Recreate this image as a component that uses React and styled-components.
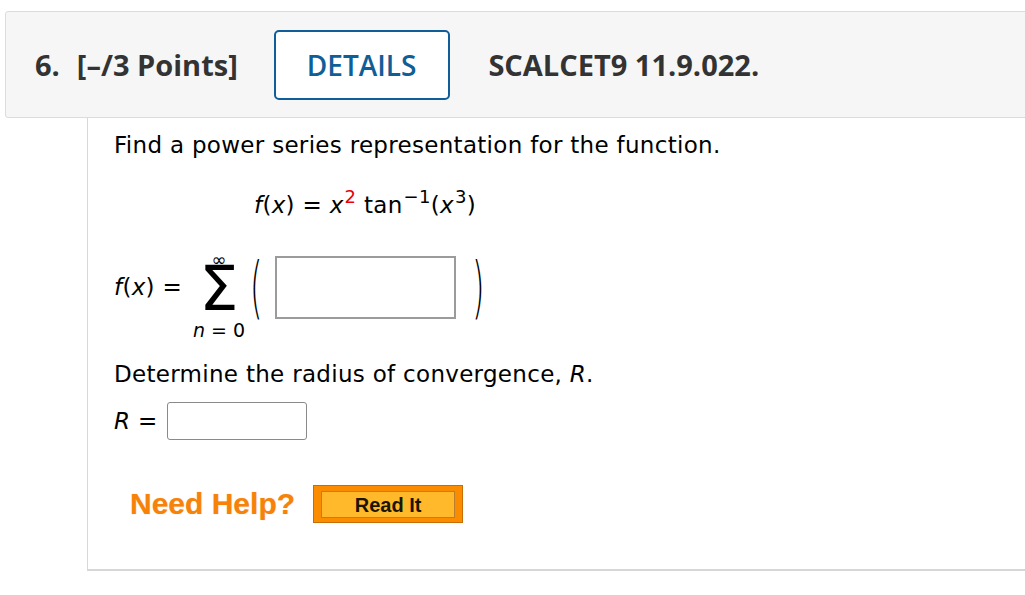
import React from 'react';
import styled, { createGlobalStyle } from 'styled-components';

const GlobalStyle = createGlobalStyle`
  html, body {
    margin: 0;
    padding: 0;
    background: #fff;
    overflow: hidden;
  }
`

const Page = styled.div`
  padding: 11px 0 0 5px;
  width: 1060px;
`

const Header = styled.div`
  display: flex;
  align-items: center;
  box-sizing: border-box;
  height: 107px;
  padding-left: 29px;
  background: #f6f6f6;
  border: 1px solid #dcdcdc;
  border-radius: 3px;
  font-family: "Open Sans", sans-serif;
  font-weight: 700;
  font-size: 29px;
  color: #333;
`

const QNum = styled.span`
  margin-right: 17px;
`

const Details = styled.button`
  box-sizing: border-box;
  height: 70px;
  margin: 0 38px 0 36px;
  padding: 0 32px 0 31px;
  background: #fff;
  border: 2px solid #0f5e99;
  border-radius: 5px;
  font-family: "Open Sans", sans-serif;
  font-weight: 600;
  font-size: 28px;
  color: #0e5e98;
`

const Body = styled.div`
  box-sizing: border-box;
  height: 453px;
  margin-left: 82px;
  padding: 14px 0 0 26px;
  border-left: 1px solid #d8d8d8;
  border-bottom: 2px solid #d6d6d6;
  font-family: "DejaVu Sans", Verdana, sans-serif;
  font-size: 23px;
  letter-spacing: 0.3px;
  line-height: 26px;
  color: #000;
`

const Text = styled.p`
  margin: ${p => p.$top || 0}px 0 0 ${p => p.$left || 0}px;
`

const Var = styled.i`
  font-style: italic;
`

const Sup = styled.sup`
  font-size: 18px;
  vertical-align: 10px;
  line-height: 0;
  margin-left: 1px;
  color: ${p => p.$red ? '#e8000b' : 'inherit'};
`

const SumRow = styled.div`
  display: flex;
  align-items: flex-start;
  margin-top: 36px;
`

const SumLabel = styled.span`
  margin-top: 20px;
  margin-right: 11px;
`

const Stack = styled.div`
  display: flex;
  flex-direction: column;
  align-items: center;
  width: 52px;
`

const Inf = styled.span`
  display: block;
  height: 12px;
  font-size: 18px;
  line-height: 12px;
`

const Sigma = styled.div`
  height: 46px;
  font-size: 62px;
  line-height: 46px;
`

const Index = styled.span`
  display: block;
  margin-top: 7px;
  font-size: 19px;
  letter-spacing: 0;
  line-height: 22px;
  white-space: pre;
`

const Paren = styled.span`
  display: inline-block;
  height: 66px;
  margin: 1px ${p => p.$right || 0}px 0 ${p => p.$left || 0}px;
  font-size: 32px;
  font-weight: 200;
  line-height: 66px;
  transform: scaleY(2.1);
`

const SeriesBox = styled.input`
  box-sizing: border-box;
  width: 181px;
  height: 63px;
  margin-top: 2px;
  border: 2px solid #9b9b9b;
  border-radius: 0;
  background: #fff;
`

const RRow = styled.div`
  display: flex;
  align-items: center;
  margin-top: 15px;
`

const RBox = styled.input`
  box-sizing: border-box;
  width: 140px;
  height: 38px;
  margin-left: 10px;
  border: 1px solid #8a8a8a;
  border-radius: 3px;
  background: #fff;
`

const HelpRow = styled.div`
  display: flex;
  align-items: center;
  margin: 45px 0 0 16px;
`

const NeedHelp = styled.span`
  font-family: "Liberation Sans", Arial, sans-serif;
  font-weight: 700;
  font-size: 30px;
  letter-spacing: 0;
  line-height: 34px;
  color: #f7820a;
  text-shadow: 0 0 1px rgba(247, 130, 10, 0.5);
`

const ReadIt = styled.div`
  box-sizing: border-box;
  width: 150px;
  height: 38px;
  margin-left: 18px;
  padding: 5px 7px 4px;
  background: #fb8c00;
  border: 1px solid #c86e00;
`

const ReadItInner = styled.div`
  box-sizing: border-box;
  height: 27px;
  display: flex;
  align-items: center;
  justify-content: center;
  background: #ffb92b;
  border: 1px solid #b97f2c;
  font-family: "Liberation Sans", Arial, sans-serif;
  font-weight: 700;
  font-size: 20px;
  letter-spacing: 0;
  color: #1b1500;
`

const App = () => (
  <>
    <GlobalStyle />
    <Page>
      <Header>
        <QNum>6.</QNum>
        <span>[–/3 Points]</span>
        <Details>DETAILS</Details>
        <span>SCALCET9 11.9.022.</span>
      </Header>
      <Body>
        <Text>Find a power series representation for the function.</Text>
        <Text $top={34} $left={140}>
          <Var>f</Var>(<Var>x</Var>) = <Var>x</Var><Sup $red>2</Sup> tan<Sup>−1</Sup>(<Var>x</Var><Sup>3</Sup>)
        </Text>
        <SumRow>
          <SumLabel><Var>f</Var>(<Var>x</Var>) =</SumLabel>
          <Stack>
            <Inf>∞</Inf>
            <Sigma>Σ</Sigma>
            <Index><Var>n</Var> = 0</Index>
          </Stack>
          <Paren $left={5} $right={12}>(</Paren>
          <SeriesBox type="text" />
          <Paren $left={16}>)</Paren>
        </SumRow>
        <Text $top={20}>Determine the radius of convergence, <Var>R</Var>.</Text>
        <RRow>
          <span><Var>R</Var> =</span>
          <RBox type="text" />
        </RRow>
        <HelpRow>
          <NeedHelp>Need Help?</NeedHelp>
          <ReadIt>
            <ReadItInner>Read It</ReadItInner>
          </ReadIt>
        </HelpRow>
      </Body>
    </Page>
  </>
);

export default App;
